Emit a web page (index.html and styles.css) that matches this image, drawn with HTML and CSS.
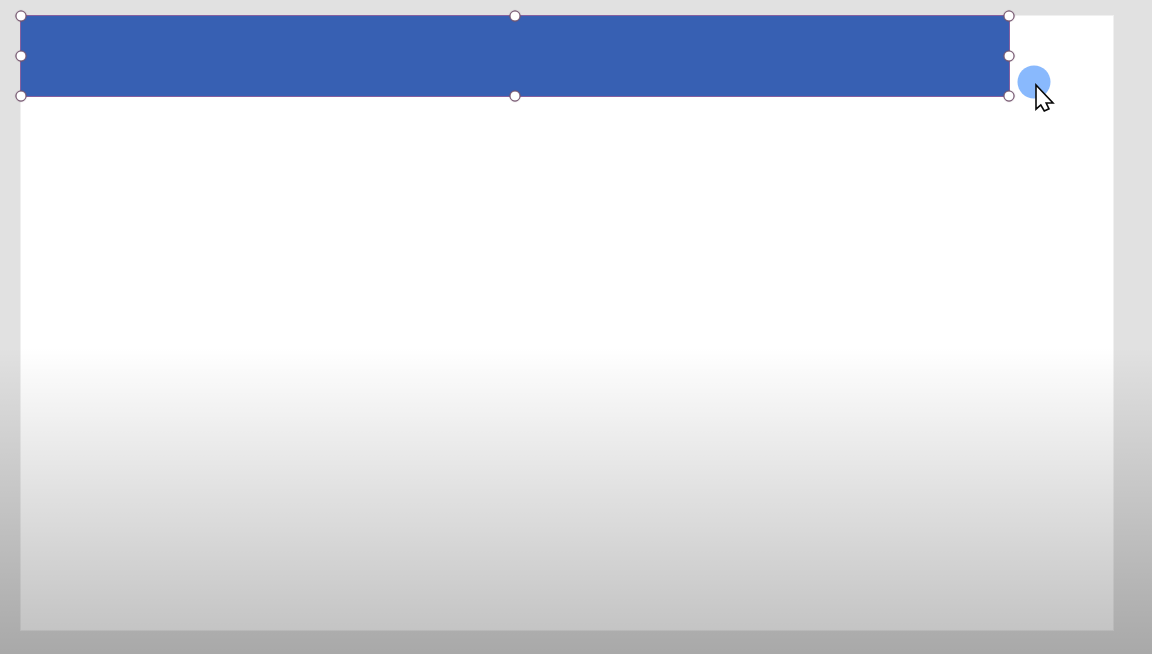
FILE: index.html
```html
<!DOCTYPE html>
<html lang="en">
<head>
<meta charset="utf-8">
<title>Canvas</title>
<link rel="stylesheet" href="styles.css">
</head>
<body>
<main class="workspace">
  <section class="artboard" aria-label="Artboard">
    <div class="shape" role="img" aria-label="Selected blue rectangle">
      <span class="handle top left"></span>
      <span class="handle top center"></span>
      <span class="handle top right"></span>
      <span class="handle middle left"></span>
      <span class="handle middle right"></span>
      <span class="handle bottom left"></span>
      <span class="handle bottom center"></span>
      <span class="handle bottom right"></span>
      <svg class="pointer" width="40" height="50" viewBox="0 0 40 50" aria-hidden="true">
        <circle cx="18" cy="18" r="16.5" fill="#89b9fd"/>
        <path d="M20 21V45.2L24.8 41L28.3 47L33 44.8L30.2 39H37Z" fill="#fff" stroke="#080808" stroke-width="1.6" stroke-linejoin="miter"/>
      </svg>
    </div>
  </section>
  <div class="shade"></div>
</main>
</body>
</html>
```
FILE: styles.css
```css
* {
  box-sizing: border-box;
}

body {
  margin: 0;
}

.workspace {
  position: relative;
  display: flex;
  min-height: 100vh;
  padding: 15px 38px 23px 20px;
  background: #e1e1e1;
  overflow: hidden;
}

.artboard {
  flex: 1;
  background: #fff;
  box-shadow: inset 0 0 0 1px #f0f0f0;
}

.shape {
  position: relative;
  width: 90.5%;
  height: 82px;
  background: #3760b3;
  border: 1px solid #86609f;
}

.handle {
  position: absolute;
  width: 11px;
  height: 11px;
  background: #fff;
  border: 1px solid #75566f;
  border-radius: 50%;
  box-shadow: 0 0 1px #75566f;
  transform: translate(-50%, -50%);
}

.top { top: 0; }
.middle { top: 50%; }
.bottom { top: 100%; }
.left { left: 0; }
.center { left: 50%; }
.right { left: 100%; }

.pointer {
  position: absolute;
  top: 48px;
  left: calc(100% + 7px);
}

.shade {
  position: absolute;
  inset: 53% 0 0;
  background: linear-gradient(rgba(0, 0, 0, 0), rgba(0, 0, 0, 0.25));
  pointer-events: none;
}
```
